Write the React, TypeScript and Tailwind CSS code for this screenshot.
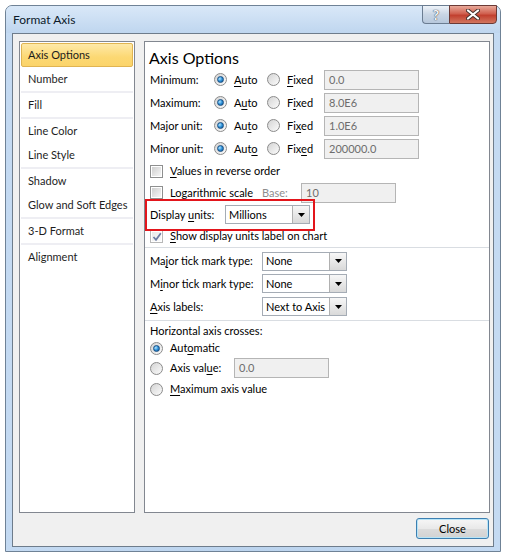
import type { ReactNode } from 'react';

const U = ({ children }: { children: ReactNode }) => (
    <span className="underline decoration-[1px] underline-offset-[2px]">{children}</span>
);

function Radio({ checked = false }: { checked?: boolean }) {
    return (
        <span className="inline-flex h-[13px] w-[13px] shrink-0 items-center justify-center rounded-full border border-[#8b8b8b] bg-[linear-gradient(135deg,#d4d4d4,#fbfbfb)]">
            {checked && (
                <span className="h-[7px] w-[7px] rounded-full border border-[#1a4f82] bg-[radial-gradient(circle_at_35%_35%,#b4e6ff,#2b8fd8_50%,#0e4e8a)]" />
            )}
        </span>
    );
}

function Checkbox({ checked = false, disabled = false }: { checked?: boolean; disabled?: boolean }) {
    return (
        <span className={`relative inline-flex h-[13px] w-[13px] shrink-0 items-center justify-center border ${disabled ? 'border-[#b8b8b8]' : 'border-[#8e8f8f]'} bg-white`}>
            <span className={`h-[9px] w-[9px] ${disabled ? 'bg-[linear-gradient(135deg,#e8e8e8,#fafafa)]' : 'bg-[linear-gradient(135deg,#cfcfcf,#f6f6f6)]'}`} />
            {checked && (
                <svg className="absolute left-[1px] top-[1px]" width="10" height="10" viewBox="0 0 10 10">
                    <path d="M1.5 5 L4 7.8 L8.8 1.2" fill="none" stroke="#6b7ba3" strokeWidth="1.7" />
                </svg>
            )}
        </span>
    );
}

const TextBox = ({ value }: { value: string }) => (
    <div className="flex h-[20px] w-[95px] shrink-0 items-center border border-[#b5b5b5] bg-[#f0f0f0] pl-[4px] text-[#6d6d6d]">
        {value}
    </div>
);

const Dropdown = ({ value }: { value: string }) => (
    <div className="flex h-[19px] w-[85px] shrink-0 items-center border border-[#a5acb5] bg-white">
        <span className="flex-1 pl-[3px]">{value}</span>
        <span className="flex h-[17px] w-[17px] items-center justify-center border-l border-[#b0b0b0] bg-[linear-gradient(#f7f7f7,#d9d9d9)]">
            <svg width="7" height="4" viewBox="0 0 7 4">
                <path d="M0 0 H7 L3.5 4 Z" fill="#000" />
            </svg>
        </span>
    </div>
);

const navGroups = [
    ['Number'],
    ['Fill'],
    ['Line Color', 'Line Style'],
    ['Shadow', 'Glow and Soft Edges'],
    ['3-D Format'],
    ['Alignment'],
];

const axisRows: { label: string; auto: ReactNode; fixed: ReactNode; value: string }[] = [
    { label: 'Minimum:', auto: <><U>A</U>uto</>, fixed: <><U>F</U>ixed</>, value: '0.0' },
    { label: 'Maximum:', auto: <>A<U>u</U>to</>, fixed: <>F<U>i</U>xed</>, value: '8.0E6' },
    { label: 'Major unit:', auto: <>Au<U>t</U>o</>, fixed: <>Fi<U>x</U>ed</>, value: '1.0E6' },
    { label: 'Minor unit:', auto: <>Aut<U>o</U></>, fixed: <>Fix<U>e</U>d</>, value: '200000.0' },
];

export default function App() {
    return (
        <div className="h-[558px] w-[506px] whitespace-nowrap bg-white pl-[5px] pt-[5px] text-[11px] leading-[14px] text-black [font-family:Lato,sans-serif]">
            <div className="flex h-[547px] w-[496px] flex-col rounded-t-[7px] border border-[#6f8296] bg-[linear-gradient(90deg,#c4daf2,#bcd4ee_50%,#c4daf2)]">
                {/* title bar */}
                <div className="flex h-[27px] shrink-0 items-start rounded-t-[6px] bg-[linear-gradient(#d9e8f8,#bfd6ef)]">
                    <span className="pl-[7px] pt-[6px] text-[12px] leading-[15px] text-[#0c1a2a]">Format Axis</span>
                    <div className="-mt-[1px] ml-auto mr-[3px] flex">
                        <div className="flex h-[19px] w-[27px] items-center justify-center rounded-bl-[4px] border border-r-0 border-[#6b7d92] bg-[linear-gradient(#eef3f9,#c9d6e5_50%,#b7c8dc)] text-[14px] font-bold text-[#f4f6f8] [text-shadow:0_0_1px_#39424d,0_0_1px_#39424d]">
                            ?
                        </div>
                        <div className="flex h-[19px] w-[48px] items-center justify-center rounded-br-[4px] border border-[#6b3a36] bg-[linear-gradient(#e9a99a,#d0604f_45%,#c2402f_55%,#d2765f)]">
                            <svg width="14" height="11" viewBox="0 0 14 11">
                                <path d="M2 1.5 L12 9.5 M12 1.5 L2 9.5" stroke="#43302c" strokeWidth="4" strokeLinecap="round" />
                                <path d="M2 1.5 L12 9.5 M12 1.5 L2 9.5" stroke="#fff" strokeWidth="2.2" strokeLinecap="round" />
                            </svg>
                        </div>
                    </div>
                </div>

                {/* client area */}
                <div className="mx-[6px] mb-[4px] flex flex-1 flex-col border border-[#6e7c8b] bg-[#f0f0f0] pl-[6px] pr-[3px] pt-[7px]">
                    <div className="flex h-[472px] gap-[9px]">
                        {/* nav list */}
                        <div className="flex w-[116px] flex-col border border-[#828790] bg-white px-[1px] pt-[1px]">
                            <div className="flex h-[24px] items-center rounded-[2px] border border-[#e0b451] bg-[linear-gradient(#fee9a8,#fcd873_60%,#fbd46a)] pl-[6px] text-[#1b1b1b]">
                                Axis Options
                            </div>
                            {navGroups.map((group, gi) => (
                                <div key={gi} className="flex flex-col">
                                    {gi > 0 && <div className="h-[2px] bg-[#eeeef3]" />}
                                    {group.map((item) => (
                                        <div key={item} className="flex h-[24px] items-center pl-[7px] text-[#1e1e1e]">
                                            {item}
                                        </div>
                                    ))}
                                </div>
                            ))}
                        </div>

                        {/* options panel */}
                        <div className="relative flex w-[346px] flex-col border border-[#828790] bg-white pl-[5px]">
                            <div className="-ml-[1px] pt-[6px] text-[16px] leading-[20px]">Axis Options</div>

                            {axisRows.map((row) => (
                                <div key={row.label} className="flex h-[23px] items-center">
                                    <span className="w-[64px]">{row.label}</span>
                                    <span className="flex w-[53px] items-center gap-[7px]">
                                        <Radio checked />
                                        <span>{row.auto}</span>
                                    </span>
                                    <span className="flex w-[57px] items-center gap-[7px]">
                                        <Radio />
                                        <span>{row.fixed}</span>
                                    </span>
                                    <TextBox value={row.value} />
                                </div>
                            ))}

                            <div className="flex h-[22px] items-center gap-[7px]">
                                <Checkbox />
                                <span><U>V</U>alues in reverse order</span>
                            </div>

                            <div className="flex h-[21px] items-center">
                                <span className="flex w-[112px] items-center gap-[7px]">
                                    <Checkbox />
                                    <span><U>L</U>ogarithmic scale</span>
                                </span>
                                <span className="w-[39px] text-[#8d8d8d]"><U>B</U>ase:</span>
                                <TextBox value="10" />
                            </div>

                            <div className="flex h-[23px] items-center">
                                <span className="w-[75px]">Display <U>u</U>nits:</span>
                                <Dropdown value="Millions" />
                            </div>

                            <div className="flex h-[20px] items-center gap-[7px]">
                                <Checkbox checked disabled />
                                <span><U>S</U>how display units label on chart</span>
                            </div>

                            <div className="h-[4px] pt-[1px]">
                                <div className="-ml-[5px] h-[1px] bg-[#d9dde2]" />
                            </div>

                            <div className="flex h-[22px] items-center">
                                <span className="w-[112px]">Ma<U>j</U>or tick mark type:</span>
                                <Dropdown value="None" />
                            </div>
                            <div className="flex h-[23px] items-center">
                                <span className="w-[112px]">M<U>i</U>nor tick mark type:</span>
                                <Dropdown value="None" />
                            </div>
                            <div className="flex h-[23px] items-center">
                                <span className="w-[112px]"><U>A</U>xis labels:</span>
                                <Dropdown value="Next to Axis" />
                            </div>

                            <div className="h-[4px] pt-[2px]">
                                <div className="-ml-[5px] h-[1px] bg-[#d9dde2]" />
                            </div>

                            <div className="flex h-[17px] items-center">Horizontal axis crosses:</div>
                            <div className="flex h-[18px] items-center gap-[7px]">
                                <Radio checked />
                                <span>Aut<U>o</U>matic</span>
                            </div>
                            <div className="flex h-[22px] items-center">
                                <span className="flex w-[84px] items-center gap-[7px]">
                                    <Radio />
                                    <span>Axis val<U>u</U>e:</span>
                                </span>
                                <TextBox value="0.0" />
                            </div>
                            <div className="flex h-[20px] items-center gap-[7px]">
                                <Radio />
                                <span><U>M</U>aximum axis value</span>
                            </div>

                            {/* annotation */}
                            <div className="absolute left-0 top-[157px] h-[32px] w-[170px] border-2 border-[#e3151b]" />
                        </div>
                    </div>

                    <div className="mt-[5px] flex justify-end pr-[1px]">
                        <button className="flex h-[21px] w-[73px] items-center justify-center rounded-[3px] border border-[#3c7fb1] bg-[linear-gradient(#f6f6f6,#e9e9e9_50%,#dcdcdc_51%,#d2d2d2)] shadow-[inset_0_0_0_1px_#b7e4f7]">
                            Close
                        </button>
                    </div>
                </div>
            </div>
        </div>
    );
}
